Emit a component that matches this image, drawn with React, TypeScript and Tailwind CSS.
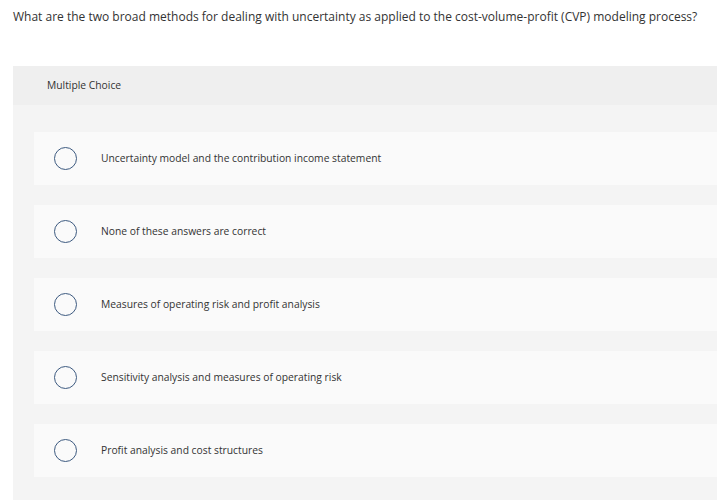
const options = [
  'Uncertainty model and the contribution income statement',
  'None of these answers are correct',
  'Measures of operating risk and profit analysis',
  'Sensitivity analysis and measures of operating risk',
  'Profit analysis and cost structures',
]

export default function App() {
  return (
    <div className="min-h-[500px] bg-white pl-[13px] pt-[9px] text-[#333]" style={{ fontFamily: '"Open Sans", Arial, sans-serif' }}>
      <p className="h-[16px] text-[12px] leading-[16px]">
        What are the two broad methods for dealing with uncertainty as applied to the cost-volume-profit (CVP) modeling process?
      </p>
      <div className="mt-[41px] bg-[#f4f4f4] pb-[30px]">
        <div className="flex h-[39px] items-center bg-[#efefef] pl-[34px] text-[10.3px]">Multiple Choice</div>
        <div className="flex flex-col gap-[20px] pl-[21px] pt-[27px]">
          {options.map((opt) => (
            <div key={opt} className="flex h-[53px] items-center bg-[#fafafa] pl-[20px]">
              <span className="h-[23px] w-[23px] shrink-0 rounded-full border-[1.5px] border-[#3d5a80]" />
              <span className="ml-[24px] text-[10.3px]">{opt}</span>
            </div>
          ))}
        </div>
      </div>
    </div>
  )
}
